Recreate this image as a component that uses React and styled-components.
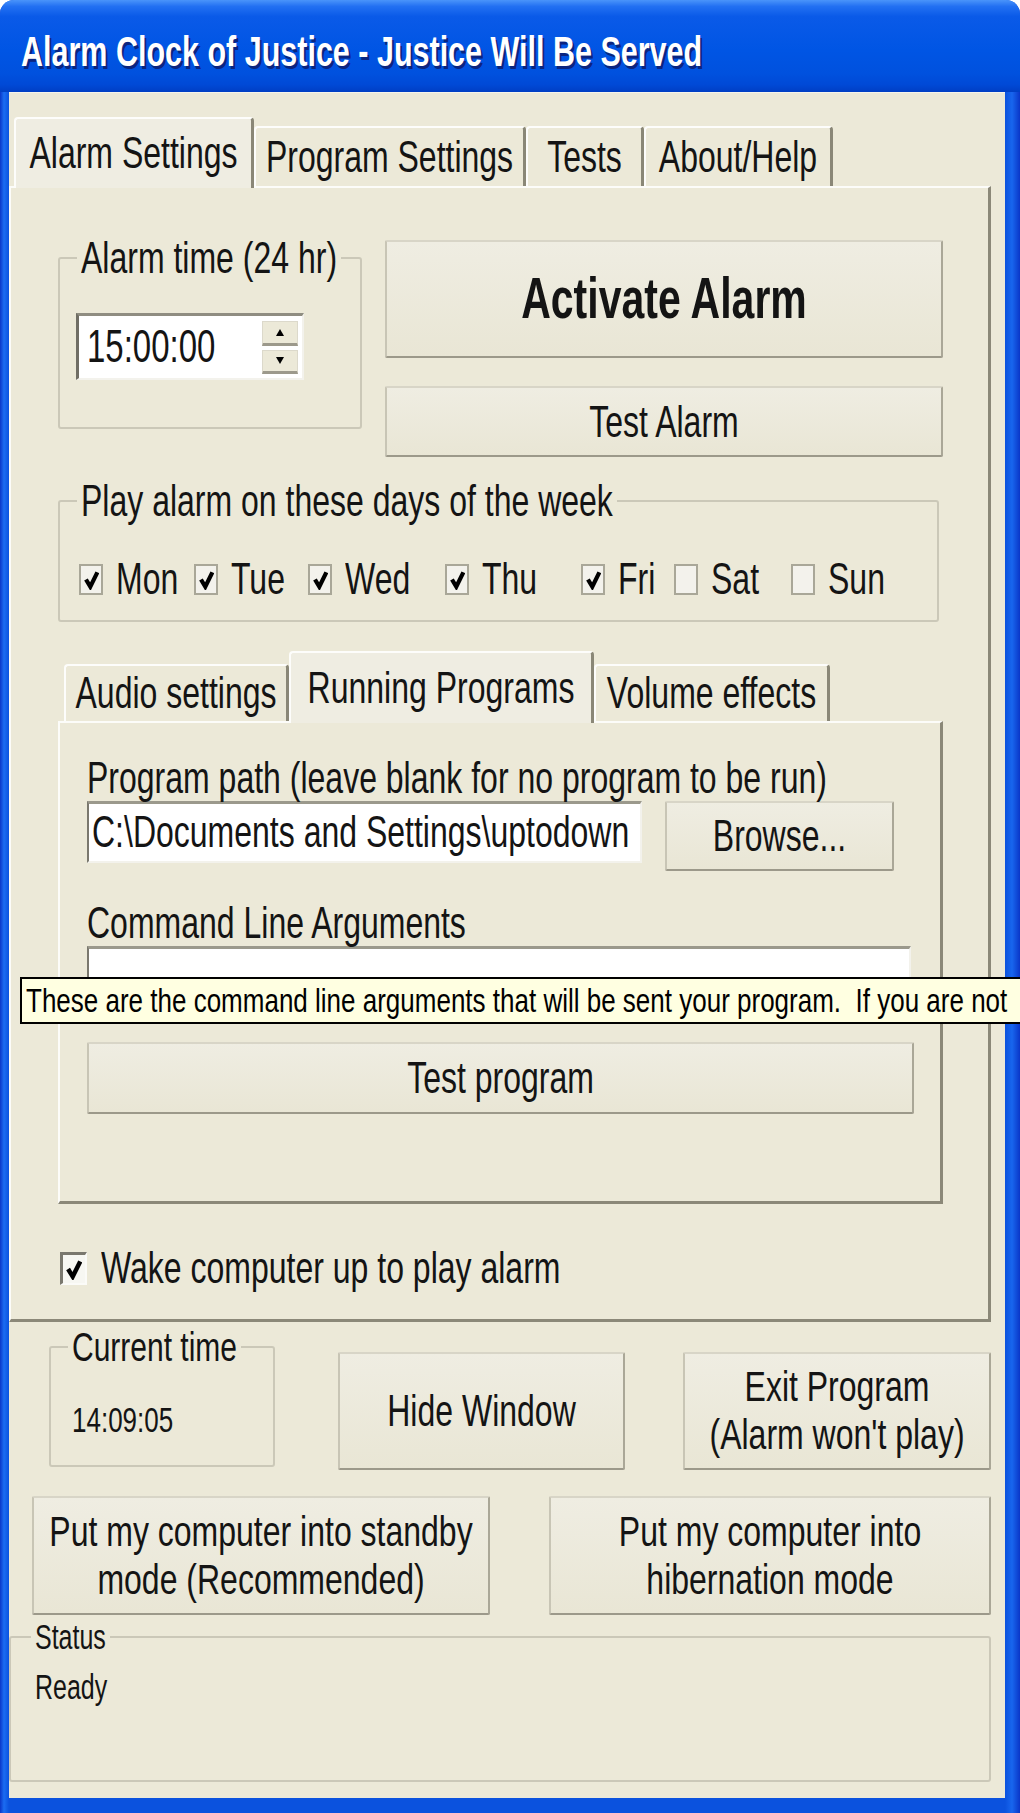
import React from "react";
import styled, { createGlobalStyle } from "styled-components";

const BEIGE = "#ece9d8";

const GlobalStyle = createGlobalStyle`
  html, body {
    margin: 0;
    padding: 0;
    background: #fff;
    overflow: hidden;
  }
  body {
    font-family: "Liberation Sans", Arial, sans-serif;
    color: #141414;
  }
`;

// text in the shot is stretched vertically, so glyphs get a scaleY
const Tx = styled.span`
  display: inline-block;
  white-space: pre;
  line-height: ${p => (p.$lh ? `${p.$lh}px` : "inherit")};
  transform: scaleY(${p => p.$s || 1.38});
`;

const Window = styled.div`
  position: relative;
  width: 1020px;
  height: 1813px;
  display: flex;
  flex-direction: column;
  border-radius: 14px 14px 0 0;
  overflow: hidden;
  background: linear-gradient(
    to right,
    #0a36c8 0,
    #1b6cf2 4px,
    #0b52de 9px,
    #0b52de 1005px,
    #1866ee 1012px,
    #0a36c8 1020px
  );
`;

const TitleBar = styled.div`
  flex: none;
  height: 92px;
  box-sizing: border-box;
  display: flex;
  align-items: center;
  padding: 10px 0 0 21px;
  background: linear-gradient(
    to bottom,
    #4a94fa 0%,
    #2270f2 7%,
    #0a5ae8 18%,
    #0055e4 55%,
    #0051de 80%,
    #0049d6 92%,
    #003ec4 100%
  );
  color: #fff;
  font-weight: bold;
  font-size: 30.5px;
  text-shadow: 2px 2px 0 #0b2580;
`;

const Frame = styled.div`
  flex: 1;
  display: flex;
  padding: 0 15px 15px 9px;
  background: linear-gradient(to bottom, transparent 1790px, #0a45d2 1798px);
`;

const Client = styled.div`
  flex: 1;
  display: flex;
  flex-direction: column;
  padding-top: 24px;
  background: ${BEIGE};
  border-top: 1px solid #f6f4ec;
`;

const TabStrip = styled.div`
  position: relative;
  z-index: 1;
  display: flex;
  align-items: flex-end;
  height: ${p => p.$h}px;
  padding-left: ${p => p.$pl}px;
`;

const Tab = styled.div`
  box-sizing: border-box;
  width: ${p => p.$w}px;
  height: ${p => p.$h}px;
  margin-bottom: ${p => (p.$active ? -2 : 0)}px;
  display: flex;
  align-items: center;
  justify-content: center;
  font-size: 32px;
  background: ${p => (p.$active ? "#efede2" : BEIGE)};
  border-top: 2px solid #fdfdfb;
  border-left: 2px solid #fdfdfb;
  border-right: 3px solid #8a8777;
  border-radius: 4px 4px 0 0;
`;

const TabPanel = styled.div`
  box-sizing: border-box;
  width: ${p => p.$w}px;
  height: ${p => p.$h}px;
  display: flex;
  flex-direction: column;
  border-style: solid;
  border-width: 2px 3px 3px 2px;
  border-color: #fcfcf9 #8b8878 #8b8878 #fcfcf9;
`;

const MainPanel = styled(TabPanel)`
  padding: 52px 45px 0 47px;
`;

const InnerPanel = styled(TabPanel)`
  padding: 37px 0 0 27px;
`;

const Group = styled.fieldset`
  margin: 0;
  min-width: 0;
  box-sizing: border-box;
  border: 2px solid #cbc8b8;
  border-radius: 3px;
`;

const Legend = styled.legend`
  padding: 0 4px;
  margin-left: ${p => p.$ml}px;
  font-size: ${p => p.$fs || 32}px;
  line-height: ${p => p.$lh || 34}px;
`;

const TopRow = styled.div`
  display: grid;
  grid-template-columns: 304px 1fr;
  column-gap: 23px;
  align-items: start;
`;

const AlarmGroup = styled(Group)`
  margin-top: 1px;
  height: 188px;
  padding: 38px 0 0 16px;
`;

const ActionColumn = styled.div`
  display: flex;
  flex-direction: column;
  gap: 28px;
`;

const Button = styled.button`
  box-sizing: border-box;
  width: ${p => (p.$w ? `${p.$w}px` : "100%")};
  height: ${p => p.$h}px;
  margin: 0;
  padding: 0;
  display: flex;
  flex-direction: column;
  align-items: center;
  justify-content: center;
  gap: ${p => p.$gap || 0}px;
  font-family: inherit;
  font-size: ${p => p.$fs || 32}px;
  font-weight: ${p => (p.$bold ? "bold" : "normal")};
  line-height: 40px;
  color: #141414;
  background: linear-gradient(to bottom, #efede2, #e9e6d5);
  border: 2px solid;
  border-color: #d8d5c7 #aaa797 #9c998a #c8c5b5;
  border-radius: 2px;
`;

// multi-line captions use a tight line box plus a gap so lines don't collide
const Btn = ({ lines, ...rest }) => {
  const multi = lines.length > 1;
  return (
    <Button {...rest}>
      {lines.map(l => (
        <Tx key={l} $s={multi ? 1.3 : 1.38} $lh={multi ? 30 : null}>
          {l}
        </Tx>
      ))}
    </Button>
  );
};

const SpinBox = styled.div`
  box-sizing: border-box;
  width: 228px;
  height: 67px;
  display: flex;
  background: #fff;
  border-style: solid;
  border-width: 3px 2px 2px 3px;
  border-color: #8f8d81 #f3f2ec #f3f2ec #706e65;
`;

const SpinText = styled.div`
  flex: 1;
  display: flex;
  align-items: center;
  padding-left: 8px;
  font-size: 33px;
`;

const SpinButtons = styled.div`
  width: 36px;
  display: flex;
  flex-direction: column;
  gap: 4px;
  padding: 5px 4px 4px 0;
`;

const SpinBtn = styled.div`
  flex: 1;
  display: flex;
  align-items: center;
  justify-content: center;
  background: ${BEIGE};
  border: 1px solid #dcd9cb;
  border-bottom: 3px solid #9c998b;
`;

const DaysGroup = styled(Group)`
  margin: 27px 4px 0 0;
  height: 138px;
  padding: 44px 0 0 19px;
`;

const DayRow = styled.div`
  display: flex;
  align-items: center;
  height: 34px;
`;

const Day = styled.div`
  flex: none;
  width: ${p => (p.$w ? `${p.$w}px` : "auto")};
  display: flex;
  align-items: center;
  gap: 13px;
  font-size: 32px;
`;

const Box = styled.span`
  box-sizing: border-box;
  width: 24px;
  height: 31px;
  display: flex;
  align-items: center;
  justify-content: center;
  background: #f3f2ec;
  border: 2px solid #a9a798;
`;

const SunkenBox = styled.span`
  box-sizing: border-box;
  width: 27px;
  height: 33px;
  display: flex;
  align-items: center;
  justify-content: center;
  background: #f7f7f2;
  border-style: solid;
  border-width: 3px 2px 2px 3px;
  border-color: #7a786e #fbfbf8 #fbfbf8 #7a786e;
`;

const Check = ({ w = 15, h = 21 }) => (
  <svg width={w} height={h} viewBox="0 0 10 14" preserveAspectRatio="none">
    <path d="M1.3 7 L4.2 11.8 L8.9 2.2" stroke="#000" strokeWidth="2.8" fill="none" />
  </svg>
);

const SubTabs = styled(TabStrip)`
  margin-top: 29px;
`;

const FieldLabel = styled.div`
  margin-top: ${p => p.$mt || 0}px;
  font-size: 32px;
  line-height: 36px;
`;

const PathRow = styled.div`
  margin-top: 5px;
  display: flex;
  align-items: flex-start;
  gap: 23px;
`;

const TextInput = styled.div`
  box-sizing: border-box;
  width: ${p => p.$w}px;
  height: ${p => p.$h}px;
  margin-top: ${p => p.$mt || 0}px;
  display: flex;
  align-items: center;
  padding-left: 3px;
  font-size: 32px;
  background: #fff;
  border-style: solid;
  border-width: 3px 2px 2px 2px;
  border-color: #9b998c #f3f2ec #f3f2ec #7a786e;
`;

const TestProgram = styled(Button)`
  margin-top: 41px;
`;

const WakeRow = styled.div`
  margin: 48px 0 0 2px;
  height: 33px;
  display: flex;
  align-items: center;
  gap: 14px;
  font-size: 32px;
`;

const BottomRow = styled.div`
  display: flex;
  align-items: flex-start;
  margin-top: ${p => p.$mt}px;
  padding-left: ${p => p.$pl}px;
  gap: ${p => p.$gap || 0}px;
`;

const ClockGroup = styled(Group)`
  width: 226px;
  height: 137px;
  padding: 41px 0 0 21px;
  font-size: 26px;
  line-height: 30px;
`;

const SideButton = styled(Button)`
  margin: 22px 0 0 ${p => p.$ml}px;
`;

const StatusGroup = styled(Group)`
  margin-top: 8px;
  width: 982px;
  height: 159px;
  padding: 22px 0 0 24px;
  font-size: 25px;
  line-height: 28px;
`;

const Tooltip = styled.div`
  position: absolute;
  left: 20px;
  top: 977px;
  width: 1040px;
  height: 47px;
  box-sizing: border-box;
  display: flex;
  align-items: center;
  padding-left: 4px;
  background: #ffffe1;
  border: 2px solid #000;
  font-size: 26px;
  color: #000;
  z-index: 5;
`;

const Tri = ({ up }) => (
  <svg width="8" height="7" viewBox="0 0 8 7">
    <path d={up ? "M4 0 L8 7 L0 7 Z" : "M0 0 L8 0 L4 7 Z"} fill="#000" />
  </svg>
);

const days = [
  { d: "Mon", w: 115, on: true },
  { d: "Tue", w: 114, on: true },
  { d: "Wed", w: 137, on: true },
  { d: "Thu", w: 136, on: true },
  { d: "Fri", w: 93, on: true },
  { d: "Sat", w: 117, on: false },
  { d: "Sun", on: false }
];

export default function App() {
  return (
    <>
      <GlobalStyle />
      <Window>
        <TitleBar>
          <Tx $s={1.4}>Alarm Clock of Justice - Justice Will Be Served</Tx>
        </TitleBar>
        <Frame>
          <Client>
            <TabStrip $h={69} $pl={5}>
              <Tab $w={240} $h={71} $active>
                <Tx>Alarm Settings</Tx>
              </Tab>
              <Tab $w={272} $h={60}>
                <Tx>Program Settings</Tx>
              </Tab>
              <Tab $w={118} $h={60}>
                <Tx>Tests</Tx>
              </Tab>
              <Tab $w={189} $h={60}>
                <Tx>About/Help</Tx>
              </Tab>
            </TabStrip>
            <MainPanel $w={982} $h={1136}>
              <TopRow>
                <AlarmGroup>
                  <Legend $ml={1}>
                    <Tx>Alarm time (24 hr)</Tx>
                  </Legend>
                  <SpinBox>
                    <SpinText>
                      <Tx>15:00:00</Tx>
                    </SpinText>
                    <SpinButtons>
                      <SpinBtn>
                        <Tri up />
                      </SpinBtn>
                      <SpinBtn>
                        <Tri />
                      </SpinBtn>
                    </SpinButtons>
                  </SpinBox>
                </AlarmGroup>
                <ActionColumn>
                  <Btn $h={118} $fs={41} $bold lines={["Activate Alarm"]} />
                  <Btn $h={71} lines={["Test Alarm"]} />
                </ActionColumn>
              </TopRow>

              <DaysGroup>
                <Legend $ml={-2}>
                  <Tx>Play alarm on these days of the week</Tx>
                </Legend>
                <DayRow>
                  {days.map(x => (
                    <Day key={x.d} $w={x.w}>
                      <Box>{x.on && <Check />}</Box>
                      <Tx>{x.d}</Tx>
                    </Day>
                  ))}
                </DayRow>
              </DaysGroup>

              <SubTabs $h={70} $pl={6}>
                <Tab $w={225} $h={57}>
                  <Tx>Audio settings</Tx>
                </Tab>
                <Tab $w={305} $h={72} $active>
                  <Tx>Running Programs</Tx>
                </Tab>
                <Tab $w={236} $h={57}>
                  <Tx>Volume effects</Tx>
                </Tab>
              </SubTabs>
              <InnerPanel $w={885} $h={483}>
                <FieldLabel>
                  <Tx>Program path (leave blank for no program to be run)</Tx>
                </FieldLabel>
                <PathRow>
                  <TextInput $w={555} $h={62}>
                    <Tx>C:\Documents and Settings\uptodown</Tx>
                  </TextInput>
                  <Btn $w={229} $h={70} lines={["Browse..."]} />
                </PathRow>
                <FieldLabel $mt={34}>
                  <Tx>Command Line Arguments</Tx>
                </FieldLabel>
                <TextInput $w={824} $h={55} $mt={5} />
                <TestProgram $w={827} $h={72}>
                  <Tx>Test program</Tx>
                </TestProgram>
              </InnerPanel>

              <WakeRow>
                <SunkenBox>
                  <Check w={16} h={22} />
                </SunkenBox>
                <Tx>Wake computer up to play alarm</Tx>
              </WakeRow>
            </MainPanel>

            <BottomRow $mt={8} $pl={40}>
              <ClockGroup>
                <Legend $ml={-4} $fs={30}>
                  <Tx>Current time</Tx>
                </Legend>
                <Tx>14:09:05</Tx>
              </ClockGroup>
              <SideButton $ml={63} $w={287} $h={118}>
                <Tx>Hide Window</Tx>
              </SideButton>
              <SideButton $ml={58} $w={308} $h={118} $gap={18}>
                <Tx $s={1.3} $lh={30}>Exit Program</Tx>
                <Tx $s={1.3} $lh={30}>(Alarm won't play)</Tx>
              </SideButton>
            </BottomRow>

            <BottomRow $mt={26} $pl={23} $gap={59}>
              <Btn
                $w={458}
                $h={119}
                $gap={18}
                lines={["Put my computer into standby", "mode (Recommended)"]}
              />
              <Btn
                $w={442}
                $h={119}
                $gap={18}
                lines={["Put my computer into", "hibernation mode"]}
              />
            </BottomRow>

            <StatusGroup>
              <Legend $ml={-4} $fs={25} $lh={28}>
                <Tx>Status</Tx>
              </Legend>
              <Tx>Ready</Tx>
            </StatusGroup>
          </Client>
        </Frame>
        <Tooltip>
          <Tx $s={1.3}>
            These are the command line arguments that will be sent your program.  If you are not
          </Tx>
        </Tooltip>
      </Window>
    </>
  );
}
